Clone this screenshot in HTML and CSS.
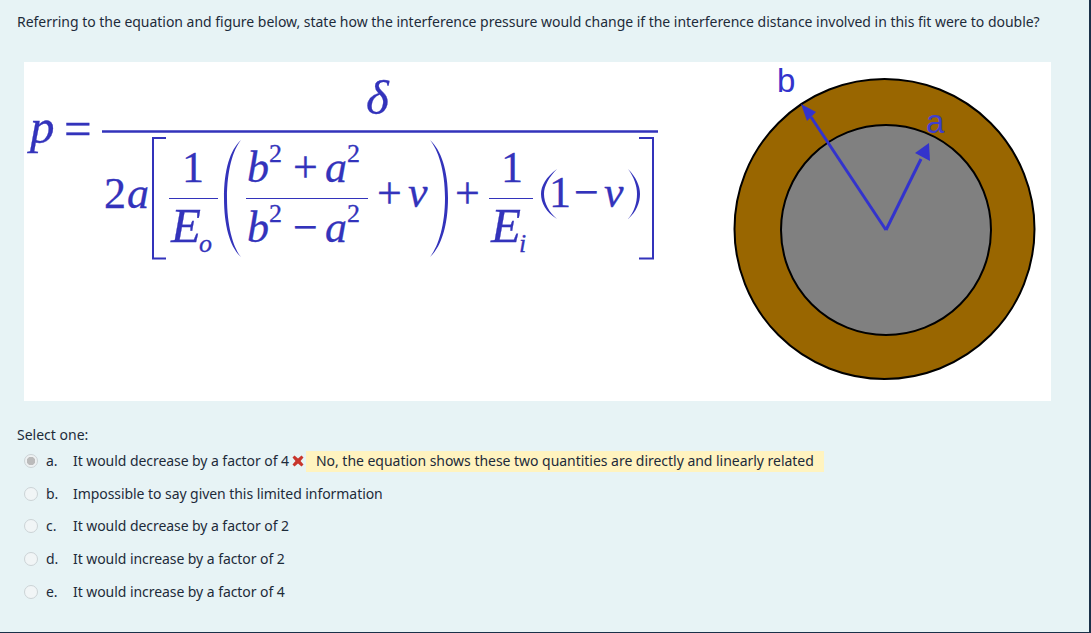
FILE: index.html
```html
<!DOCTYPE HTML>
<html lang="en">
<head>
    <meta charset="UTF-8">
    <title>Question</title>
    <link rel="stylesheet" href="styles.css">
</head>
<body>

<div class="question">
    <p class="questionText">Referring to the equation and figure below, state how the interference pressure would change if the interference distance involved in this fit were to double?</p>

    <svg class="figure" width="1027" height="339" viewBox="24 62 1027 339">
        <rect x="24" y="62" width="1027" height="339" fill="#fff"/>

        <!-- equation -->
        <g class="eq">
            <text class="wide it" x="30" y="143">p</text>
            <text class="wide" x="64" y="145">=</text>
            <text class="wide it" x="366" y="114">δ</text>
            <line class="mainBar" x1="102" y1="131.5" x2="658" y2="131.5"/>

            <text class="big" x="104" y="208">2</text>
            <text class="big it" x="127" y="208">a</text>
            <path class="bracket" d="M166 138H153V258.500H166"/>

            <text class="big" x="182" y="182">1</text>
            <line x1="169" y1="198.500" x2="218" y2="198.500"/>
            <text class="wide it" x="171" y="242">E</text>
            <text class="sub it" x="199" y="252">o</text>

            <path class="paren" d="M241 140C230 150 224 170 224 198C224 226 230 247 241 257C233 247 227 226 227 198C227 170 233 150 241 140Z"/>

            <text class="big it" x="247" y="182">b</text>
            <text class="sup" x="269" y="162">2</text>
            <text class="big" x="293" y="182">+</text>
            <text class="big it" x="325" y="182">a</text>
            <text class="sup" x="347" y="162">2</text>
            <line x1="246" y1="198.500" x2="368" y2="198.500"/>
            <text class="big it" x="247" y="242">b</text>
            <text class="sup" x="269" y="222">2</text>
            <text class="big" x="293" y="242">−</text>
            <text class="big it" x="325" y="242">a</text>
            <text class="sup" x="347" y="222">2</text>

            <text class="big" x="377" y="208">+</text>
            <text class="big it" x="408" y="207">v</text>
            <path class="paren" d="M430 140C441 150 448 170 448 198C448 226 441 247 430 257C438 247 445 226 445 198C445 170 438 150 430 140Z"/>

            <text class="big" x="455" y="208">+</text>
            <text class="big" x="501" y="182">1</text>
            <line x1="489" y1="198.500" x2="533" y2="198.500"/>
            <text class="wide it" x="491" y="242">E</text>
            <text class="sub it" x="519" y="252">i</text>

            <path class="paren" d="M557 169C546 177 541 186 541 194C541 203 546 212 557 219C549 212 544 203 544 194C544 186 549 177 557 169Z"/>
            <text class="big" x="549" y="207">1</text>
            <text class="big" x="574" y="207">−</text>
            <text class="big it" x="604" y="207">v</text>
            <path class="paren" d="M628 169C636 177 640 186 640 194C640 203 636 212 628 219C634 212 637 203 637 194C637 186 634 177 628 169Z"/>
            <path class="bracket" d="M639 138H653V258.500H639"/>
        </g>

        <!-- cross section -->
        <circle cx="884.500" cy="229" r="150" fill="#996600" stroke="#000" stroke-width="2"/>
        <circle cx="886" cy="230" r="105" fill="#808080" stroke="#000" stroke-width="2"/>
        <g class="arrows">
            <line x1="886" y1="230" x2="921" y2="159"/>
            <path d="M929 143L915 153L930 161Z"/>
            <line x1="886" y1="230" x2="811" y2="117"/>
            <path d="M801 104L816 112L807 121Z"/>
            <text class="label" x="777" y="92">b</text>
            <text class="label lightLabel" x="926" y="133">a</text>
        </g>
    </svg>

    <div class="answerBox">
        <div class="prompt">Select one:</div>
        <div class="answer">
            <div class="option">
                <span class="radio on"></span><span class="letter">a.</span>
                <span>It would decrease by a factor of 4</span>
                <svg class="wrongIcon" width="12" height="12" viewBox="0 0 12 12"><path d="M0.500 2.500L2.500 0.500L6 3.500L9.500 0.500L11.500 2.500L8.500 6L11.500 9.500L9.500 11.500L6 8.500L2.500 11.500L0.500 9.500L3.500 6Z"/></svg>
                <span class="feedback">No, the equation shows these two quantities are directly and linearly related</span>
            </div>
            <div class="option"><span class="radio"></span><span class="letter">b.</span><span>Impossible to say given this limited information</span></div>
            <div class="option"><span class="radio"></span><span class="letter">c.</span><span>It would decrease by a factor of 2</span></div>
            <div class="option"><span class="radio"></span><span class="letter">d.</span><span>It would increase by a factor of 2</span></div>
            <div class="option"><span class="radio"></span><span class="letter">e.</span><span>It would increase by a factor of 4</span></div>
        </div>
    </div>
</div>

</body>
</html>
```

FILE: styles.css
```css
html, body {
    margin: 0;
    padding: 0;
    height: 100%;
}
body {
    background-color: #e7f3f5;
    color: #1d2b3a;
    font-family: "Noto Sans", sans-serif;
    font-size: 14px;
    line-height: 20px;
    overflow: hidden;
}
.question {
    box-sizing: border-box;
    height: 100%;
    padding: 12px 0 0 16px;
    border-right: 2px solid #1a3048;
    border-bottom: 1px solid #1a3048;
}
.questionText {
    margin: 0 0 30px 1px;
    letter-spacing: -0.024px;
    white-space: nowrap;
}
.figure {
    display: block;
    margin-left: 8px;
}
.eq text {
    font-family: "Liberation Serif", serif;
    fill: #3333bb;
    stroke: #3333bb;
    stroke-width: 0.3;
}
.eq line {
    stroke: #3333bb;
    stroke-width: 1.2;
}
.eq .mainBar {
    stroke-width: 2.4;
}
.eq .it {
    font-style: italic;
}
.eq .big {
    font-size: 44px;
}
.eq .wide {
    font-size: 49px;
}
.eq .sup {
    font-size: 26px;
}
.eq .sub {
    font-size: 26px;
}
.bracket {
    fill: none;
    stroke: #3333bb;
    stroke-width: 2;
}
.paren {
    fill: #3333bb;
}
.arrows line {
    stroke: #3333cc;
    stroke-width: 3;
}
.arrows path {
    fill: #3333cc;
}
.label {
    font-family: "Liberation Sans", sans-serif;
    font-size: 33px;
    fill: #3333cc;
}
.lightLabel {
    fill: #3f3fcc;
}
.answerBox {
    margin-top: 24px;
}
.prompt {
    margin: 0 0 6px 1px;
}
.answer {
    display: flex;
    flex-direction: column;
    gap: 12.700px;
    padding-left: 8px;
    letter-spacing: -0.06px;
}
.option {
    display: flex;
    align-items: center;
    height: 20px;
}
.radio {
    box-sizing: border-box;
    width: 14px;
    height: 14px;
    margin-right: 8px;
    border: 1px solid #ccd3d6;
    border-radius: 50%;
    background-color: #f1f5f6;
}
.radio.on {
    background: radial-gradient(circle, #bbb 0 4px, #eef1f2 4.500px);
}
.letter {
    width: 27px;
}
.wrongIcon {
    margin-left: 3px;
}
.wrongIcon path {
    fill: #c8352c;
}
.feedback {
    align-self: flex-start;
    margin-left: 2px;
    padding: 0 10px 1px;
    letter-spacing: -0.03px;
    background-color: #fff3bf;
}
```
